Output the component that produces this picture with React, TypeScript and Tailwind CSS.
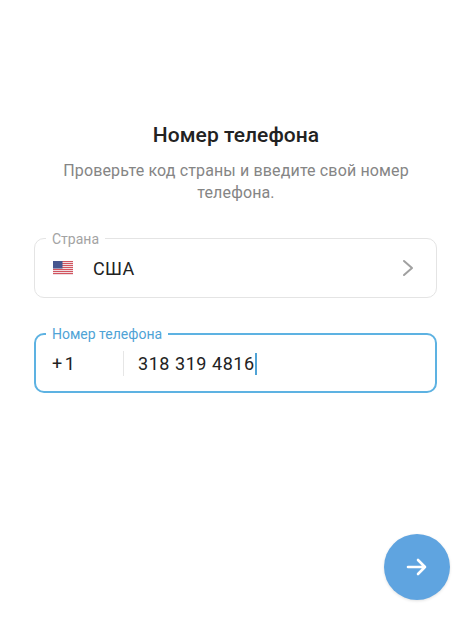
function UsFlag(): React.ReactElement {
	const stripes = [0, 2, 4, 6, 8, 10, 12]
	return (
		<svg width="20" height="14" viewBox="0 0 20 14" className="shrink-0">
			<rect width="20" height="14" fill="#f3eef0" />
			{stripes.map((y) => (
				<rect key={y} x="0" y={y} width="20" height="1.1" fill="#d2545f" />
			))}
			<rect width="9.5" height="7.5" fill="#46568f" />
		</svg>
	)
}

export default function App(): React.ReactElement {
	return (
		<div className="relative h-[626px] w-[474px] overflow-hidden bg-white font-['Roboto',sans-serif]">
			{/* Encabezado */}
			<div className="flex flex-col items-center pt-[122px] pr-[2px]">
				<h1 className="text-[21px] leading-[27px] font-medium tracking-[0.05px] text-[#222222]">Номер телефона</h1>
				<p className="mt-[11px] w-[370px] text-center text-[16px] leading-[22px] tracking-[0.14px] text-[#858585]">
					Проверьте код страны и введите свой номер телефона.
				</p>
			</div>

			{/* Campos */}
			<div className="mt-[34px] flex flex-col gap-[35px] pr-[37px] pl-[34px]">
				<div className="relative flex h-[60px] items-center rounded-[10px] border border-[#e4e4e4] pr-[22px] pl-[18px]">
					<span className="absolute top-[-8px] left-[11px] bg-white px-[6px] text-[14px] leading-[16px] text-[#a3a3a3]">
						Страна
					</span>
					<UsFlag />
					<span className="ml-[20px] text-[18px] tracking-[0.3px] text-[#222222]">США</span>
					<svg width="12" height="18" viewBox="0 0 12 18" fill="none" className="ml-auto">
						<path d="M2 2l8 7-8 7" stroke="#a0a0a0" strokeWidth="2" strokeLinecap="round" strokeLinejoin="round" />
					</svg>
				</div>

				<div className="relative flex h-[60px] items-center rounded-[10px] border-2 border-[#5db2e2] pt-[1px] pl-[16px]">
					<span className="absolute top-[-9px] left-[10px] bg-white px-[6px] text-[14px] leading-[16px] text-[#4fa3d6]">
						Номер телефона
					</span>
					<span className="w-[71px] text-[18px] tracking-[2.5px] text-[#222222]">+1</span>
					<div className="h-[25px] w-px bg-[#e6e6e6]" />
					<span className="ml-[14px] text-[18px] tracking-[0.55px] text-[#222222]">318 319 4816</span>
					<div className="h-[22px] w-[2px] bg-[#4fa3d6]" />
				</div>
			</div>

			{/* Botón siguiente */}
			<button className="absolute top-[534px] left-[384px] flex h-[66px] w-[66px] items-center justify-center rounded-full bg-[#5fa4e0] shadow-[0_1px_3px_rgba(0,0,0,0.12)]">
				<svg width="22" height="20" viewBox="0 0 22 20" fill="none">
					<path d="M2 10h17M12 3l7 7-7 7" stroke="white" strokeWidth="2.6" strokeLinecap="round" strokeLinejoin="round" />
				</svg>
			</button>
		</div>
	)
}
